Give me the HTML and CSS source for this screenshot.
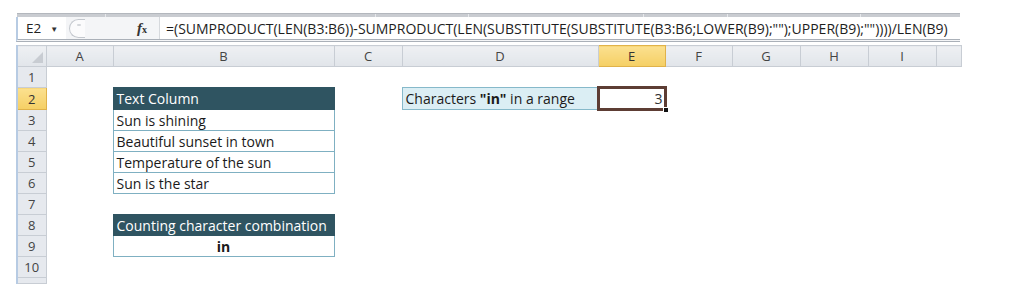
FILE: index.html
```html
<!DOCTYPE html>
<html lang="en">

<head>
  <meta charset="UTF-8">
  <title>Counting characters</title>
  <link rel="stylesheet" href="styles.css">
</head>

<body>
  <div class="window">
    <div class="ribbon-edge">
      <span class="sep s1"></span>
      <span class="sep s2"></span>
      <span class="sep s3"></span>
      <span class="sep s4"></span>
      <span class="sep s5"></span>
      <span class="sep s6"></span>
    </div>

    <!-- formula bar -->
    <div class="formula-bar">
      <div class="name-box">
        <span class="ref">E2</span>
        <span class="drop">&#9660;</span>
      </div>
      <div class="round-btn"><span class="dot"></span></div>
      <div class="fx"><i>f</i><small>x</small></div>
      <div class="formula">=(SUMPRODUCT(LEN(B3:B6))-SUMPRODUCT(LEN(SUBSTITUTE(SUBSTITUTE(B3:B6;LOWER(B9);"");UPPER(B9);""))))/LEN(B9)</div>
    </div>

    <table class="sheet">
      <colgroup>
        <col class="w-rh">
        <col class="w-a">
        <col class="w-b">
        <col class="w-c">
        <col class="w-d">
        <col class="w-e">
        <col class="w-f">
        <col class="w-g">
        <col class="w-h">
        <col class="w-i">
        <col class="w-j">
      </colgroup>
      <thead>
        <tr>
          <th class="corner"><span class="tri"></span></th>
          <th>A</th>
          <th>B</th>
          <th>C</th>
          <th>D</th>
          <th class="hl">E</th>
          <th>F</th>
          <th>G</th>
          <th>H</th>
          <th>I</th>
          <th></th>
        </tr>
      </thead>
      <tbody>
        <tr>
          <th>1</th>
          <td></td><td></td><td></td><td></td><td></td><td></td><td></td><td></td><td></td><td></td>
        </tr>
        <tr>
          <th class="hl">2</th>
          <td></td>
          <td class="t-head">Text Column</td>
          <td></td>
          <td class="label">Characters <b>"in"</b> in a range</td>
          <td class="active"><span class="val">3</span><span class="handle"></span></td>
          <td></td><td></td><td></td><td></td><td></td>
        </tr>
        <tr>
          <th>3</th>
          <td></td><td class="t-cell">Sun is shining</td>
          <td></td><td></td><td></td><td></td><td></td><td></td><td></td><td></td>
        </tr>
        <tr>
          <th>4</th>
          <td></td><td class="t-cell">Beautiful sunset in town</td>
          <td></td><td></td><td></td><td></td><td></td><td></td><td></td><td></td>
        </tr>
        <tr>
          <th>5</th>
          <td></td><td class="t-cell">Temperature of the sun</td>
          <td></td><td></td><td></td><td></td><td></td><td></td><td></td><td></td>
        </tr>
        <tr>
          <th>6</th>
          <td></td><td class="t-cell">Sun is the star</td>
          <td></td><td></td><td></td><td></td><td></td><td></td><td></td><td></td>
        </tr>
        <tr>
          <th>7</th>
          <td></td><td></td><td></td><td></td><td></td><td></td><td></td><td></td><td></td><td></td>
        </tr>
        <tr>
          <th>8</th>
          <td></td><td class="t-head">Counting character combination</td>
          <td></td><td></td><td></td><td></td><td></td><td></td><td></td><td></td>
        </tr>
        <tr>
          <th>9</th>
          <td></td><td class="t-cell center"><b>in</b></td>
          <td></td><td></td><td></td><td></td><td></td><td></td><td></td><td></td>
        </tr>
        <tr>
          <th>10</th>
          <td></td><td></td><td></td><td></td><td></td><td></td><td></td><td></td><td></td><td></td>
        </tr>
        <tr class="cut">
          <th></th>
          <td></td><td></td><td></td><td></td><td></td><td></td><td></td><td></td><td></td><td></td>
        </tr>
      </tbody>
    </table>
  </div>
</body>

</html>
```

FILE: styles.css
```css
* {
  box-sizing: border-box;
  margin: 0;
  padding: 0;
}

body {
  background-color: white;
  font-family: "Open Sans", "Noto Sans", sans-serif;
  color: #1a1a1a;
}

.window {
  width: 944px;
  margin: 13px 0 0 16px;
}

.ribbon-edge {
  height: 4px;
  background-color: #c9ccd1;
  border-top: 1px solid #b3b7bd;
  position: relative;
  margin-left: 1px;
}

.sep {
  position: absolute;
  top: 0;
  width: 1px;
  height: 3px;
  background-color: #e6e8eb;
}

.s1 { left: 88px; }
.s2 { left: 358px; }
.s3 { left: 451px; }
.s4 { left: 626px; }
.s5 { left: 710px; }
.s6 { left: 843px; }

/* formula bar */
.formula-bar {
  display: flex;
  align-items: center;
  height: 25px;
  border-left: 2px solid #b7cbe3;
  border-bottom: 3px double #aab0b8;
  background-color: #f4f5f7;
}

.name-box {
  width: 48px;
  height: 100%;
  display: flex;
  align-items: center;
  padding-left: 8px;
  background-color: white;
  font-size: 13.5px;
  color: #222;
}

.drop {
  font-size: 8px;
  margin-left: 9px;
  color: #333;
}

.round-btn {
  position: relative;
  width: 16px;
  height: 19px;
  margin-left: 3px;
  border: 1px solid #c4c8ce;
  border-right: none;
  border-radius: 10px 0 0 10px;
  background-color: #fbfbfc;
}

.dot {
  position: absolute;
  left: 7px;
  top: 4px;
  width: 4px;
  height: 2px;
  border-radius: 2px;
  background-color: #d4d7db;
}

.fx {
  margin-left: 52px;
  width: 22px;
  font-family: "Liberation Serif", serif;
  font-weight: bold;
  font-size: 15px;
  color: #333;
}

.fx small {
  font-size: 10px;
}

.formula {
  flex: 1;
  height: 100%;
  background-color: white;
  border-left: 1px solid #d6d9dd;
  padding-left: 6px;
  font-size: 14px;
  line-height: 24px;
  white-space: nowrap;
  overflow: hidden;
  color: #1e1e1e;
}

/* sheet grid */
.sheet {
  margin-top: 3px;
  border-collapse: collapse;
  table-layout: fixed;
  width: 944px;
  border-left: 2px solid #b7cbe3;
}

.w-rh { width: 29px; }
.w-a { width: 67px; }
.w-b { width: 221px; }
.w-c { width: 68px; }
.w-d { width: 196px; }
.w-e { width: 67px; }
.w-f { width: 67px; }
.w-g { width: 68px; }
.w-h { width: 68px; }
.w-i { width: 68px; }
.w-j { width: 25px; }

tr {
  height: 21px;
}

tr.cut {
  height: 6px;
}

th {
  background-color: #e6e9ee;
  border: 1px solid #c8cdd4;
  font-weight: normal;
  font-size: 13px;
  color: #444;
  text-align: center;
  padding: 0;
}

thead th {
  background: linear-gradient(#eef0f3, #e1e5ea);
}

th.hl {
  background: linear-gradient(#fbe08f, #f5cf64);
  border-color: #e0b24a;
  color: #333;
}

.corner {
  position: relative;
}

.tri {
  position: absolute;
  right: 3px;
  bottom: 3px;
  width: 0;
  height: 0;
  border-left: 11px solid transparent;
  border-bottom: 11px solid #c8ccd2;
}

td {
  padding: 0 3px;
  font-size: 14px;
  white-space: nowrap;
  overflow: hidden;
}

.t-head {
  background-color: #2f5461;
  color: white;
  border: 1px solid #2f5461;
}

.t-cell {
  border: 1px solid #7fb0c2;
}

.center {
  text-align: center;
}

.label {
  background-color: #dbeef4;
  border: 1px solid #86b9ca;
}

.active {
  position: relative;
  border: 3px solid #5d3d34;
  text-align: right;
  padding-right: 1px;
  overflow: visible;
}

.val {
  color: #333;
}

.handle {
  position: absolute;
  right: -5px;
  bottom: -5px;
  width: 6px;
  height: 6px;
  background-color: #111;
  border: 1px solid white;
}
```
